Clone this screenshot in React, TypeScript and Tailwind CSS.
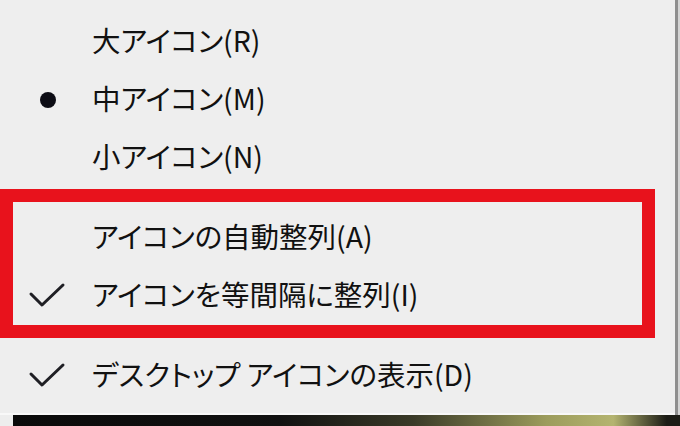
import React from "react";

type Item = { label: string; mark?: "dot" | "check" };

const topGroup: Item[] = [
  { label: "大アイコン(R)" },
  { label: "中アイコン(M)", mark: "dot" },
  { label: "小アイコン(N)" },
];

const midGroup: Item[] = [
  { label: "アイコンの自動整列(A)" },
  { label: "アイコンを等間隔に整列(I)", mark: "check" },
];

const bottomGroup: Item[] = [{ label: "デスクトップ アイコンの表示(D)", mark: "check" }];

function Check() {
  return (
    <svg width="38" height="28" viewBox="0 0 38 28" className="ml-[28px]">
      <path d="M3 12 L14 23 L35 3" fill="none" stroke="#1f1f24" strokeWidth="3" strokeLinecap="round" strokeLinejoin="round" />
    </svg>
  );
}

function Row({ item }: { item: Item }) {
  return (
    <div className="h-[58px] flex items-center">
      <div className="w-[92px] flex items-center">
        {item.mark === "dot" && <div className="ml-[40px] w-[16px] h-[16px] rounded-full bg-[#0c0c14]" />}
        {item.mark === "check" && <Check />}
      </div>
      <span className="text-[28.5px] leading-none text-[#111111] whitespace-pre [font-feature-settings:'palt'] font-['Noto_Sans_CJK_JP',sans-serif] -mt-[3px]">
        {item.label}
      </span>
    </div>
  );
}

// separators sit under the red annotation box
function Separator() {
  return (
    <div className="h-[22px] flex items-center pl-[80px] pr-[40px]">
      <div className="h-px w-full bg-[#c8c8c8]" />
    </div>
  );
}

export default function App() {
  return (
    <div className="relative w-[680px] h-[426px] overflow-hidden flex flex-col bg-[#d2d2d2]">
      <div className="flex h-[415px]">
        <div className="w-[675px] bg-[#eeeeee] flex flex-col pt-[13px] border-b-2 border-[#f8f8f8]">
          {topGroup.map((it) => (
            <Row key={it.label} item={it} />
          ))}
          <Separator />
          {midGroup.map((it) => (
            <Row key={it.label} item={it} />
          ))}
          <Separator />
          {bottomGroup.map((it) => (
            <Row key={it.label} item={it} />
          ))}
        </div>
        <div className="w-[3px] bg-[#8e8e8e]" />
        <div className="flex-1 bg-[#d4d4d4]" />
      </div>
      <div className="flex-1 flex">
        <div className="w-[13px] bg-[#ededed]" />
        <div className="flex-1 bg-[linear-gradient(90deg,#0a0a0a_0%,#111111_40%,#3a3a28_60%,#9c9c5c_80%,#b4b470_90%,#1c1c16_98%)]" />
      </div>

      {/* red annotation box */}
      <div className="absolute left-0 top-[189px] w-[655px] h-[149px] border-[13px] border-[#e8121c]" />
    </div>
  );
}
